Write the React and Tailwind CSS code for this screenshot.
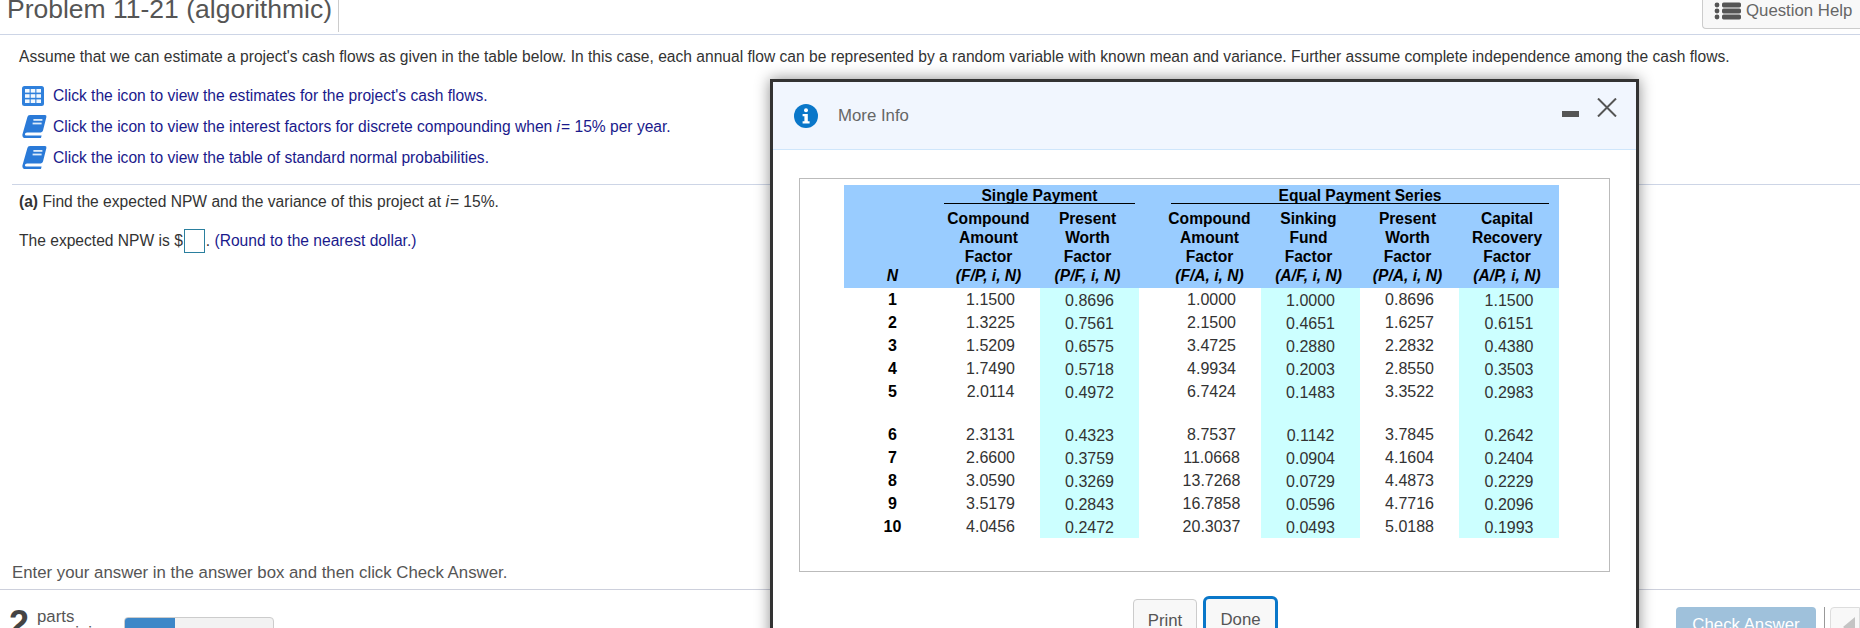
import React from 'react';

const font = "font-['Liberation_Sans',Arial,sans-serif]";

const rows = [
  ['1', '1.1500', '0.8696', '1.0000', '1.0000', '0.8696', '1.1500'],
  ['2', '1.3225', '0.7561', '2.1500', '0.4651', '1.6257', '0.6151'],
  ['3', '1.5209', '0.6575', '3.4725', '0.2880', '2.2832', '0.4380'],
  ['4', '1.7490', '0.5718', '4.9934', '0.2003', '2.8550', '0.3503'],
  ['5', '2.0114', '0.4972', '6.7424', '0.1483', '3.3522', '0.2983'],
  null,
  ['6', '2.3131', '0.4323', '8.7537', '0.1142', '3.7845', '0.2642'],
  ['7', '2.6600', '0.3759', '11.0668', '0.0904', '4.1604', '0.2404'],
  ['8', '3.0590', '0.3269', '13.7268', '0.0729', '4.4873', '0.2229'],
  ['9', '3.5179', '0.2843', '16.7858', '0.0596', '4.7716', '0.2096'],
  ['10', '4.0456', '0.2472', '20.3037', '0.0493', '5.0188', '0.1993'],
];

const heads = [
  [['Compound', 'Amount', 'Factor'], '(F/P, i, N)'],
  [['Present', 'Worth', 'Factor'], '(P/F, i, N)'],
  null,
  [['Compound', 'Amount', 'Factor'], '(F/A, i, N)'],
  [['Sinking', 'Fund', 'Factor'], '(A/F, i, N)'],
  [['Present', 'Worth', 'Factor'], '(P/A, i, N)'],
  [['Capital', 'Recovery', 'Factor'], '(A/P, i, N)'],
];

function GridIcon() {
  return (
    <svg width="22" height="20" viewBox="0 0 22 20" className="shrink-0">
      <rect width="22" height="20" rx="2.5" fill="#2f80dc" />
      {[3, 8.2, 13.4].map((y) =>
        [3, 8.7, 14.4].map((x) => <rect key={x + '-' + y} x={x} y={y} width="4.6" height="3.6" fill="#f2f8fe" />)
      )}
    </svg>
  );
}

function BookIcon() {
  return (
    <svg width="25" height="23" viewBox="0 0 25 23" className="shrink-0">
      <path d="M5.4 2 Q5.8 0 8 0 H23 Q24.8 0 24.4 2 L21 15.6 Q20.6 17.4 18.8 17.4 H5 Q3.2 17.4 2.9 19 Q2.7 20.6 4.6 20.6 H19.6 L19 23 H3.6 Q0 23 0.4 19.4 Z" fill="#2a7ad8" />
      <rect x="11.4" y="4" width="9" height="1.8" fill="#dcebfb" />
      <rect x="10.6" y="7.6" width="9" height="1.8" fill="#dcebfb" />
    </svg>
  );
}

function ListIcon() {
  return (
    <svg width="27" height="18" viewBox="0 0 27 18" className="shrink-0">
      <circle cx="3" cy="3" r="2.4" fill="#555" />
      <circle cx="3" cy="9" r="2.4" fill="#555" />
      <circle cx="3" cy="15" r="2.4" fill="#555" />
      <rect x="8" y="0.6" width="19" height="4.8" rx="1.6" fill="#555" />
      <rect x="8" y="6.6" width="19" height="4.8" rx="1.6" fill="#555" />
      <rect x="8" y="12.6" width="19" height="4.8" rx="1.6" fill="#555" />
    </svg>
  );
}

function InfoTable() {
  return (
    <table className="border-collapse table-fixed w-[715px] text-[16px] leading-[19px] text-[#333] ml-[44px]">
      <colgroup>
        <col className="w-[97px]" />
        <col className="w-[99px]" />
        <col className="w-[99px]" />
        <col className="w-[23px]" />
        <col className="w-[99px]" />
        <col className="w-[99px]" />
        <col className="w-[99px]" />
        <col className="w-[100px]" />
      </colgroup>
      <thead className="bg-[#99ccff] text-black text-[15.6px] leading-[19px] font-bold">
        <tr>
          <th className="p-0" />
          <th colSpan={2} className="p-0 pt-[1px] font-bold"><div className="ml-[3px] mr-[4px] border-b border-black h-[18px] leading-[20px]">Single Payment</div></th>
          <th className="p-0" />
          <th colSpan={4} className="p-0 pt-[1px] font-bold"><div className="ml-[9px] mr-[10px] border-b border-black h-[18px] leading-[20px]">Equal Payment Series</div></th>
        </tr>
        <tr>
          <th className="p-0 pb-[3px] align-bottom italic font-bold">N</th>
          {heads.map((h, i) =>
            h ? (
              <th key={i} className="p-0 pt-[5px] pb-[3px] pr-[4px] font-bold">
                {h[0].map((l, j) => <div key={j}>{l}</div>)}
                <div className="italic">{h[1]}</div>
              </th>
            ) : (
              <th key={i} className="p-0" />
            )
          )}
        </tr>
      </thead>
      <tbody>
        {rows.map((r, i) =>
          r ? (
            <tr key={i} className="h-[23px] text-center">
              <td className="p-0 font-bold text-black">{r[0]}</td>
              <td className="p-0">{r[1]}</td>
              <td className="p-0 bg-[#ccffff]"><span className="relative top-[1px]">{r[2]}</span></td>
              <td className="p-0" />
              <td className="p-0">{r[3]}</td>
              <td className="p-0 bg-[#ccffff]"><span className="relative top-[1px]">{r[4]}</span></td>
              <td className="p-0">{r[5]}</td>
              <td className="p-0 bg-[#ccffff]"><span className="relative top-[1px]">{r[6]}</span></td>
            </tr>
          ) : (
            <tr key={i} className="h-[20px]"><td colSpan={2} /><td className="bg-[#ccffff]" /><td /><td /><td className="bg-[#ccffff]" /><td /><td className="bg-[#ccffff]" /></tr>
          )
        )}
      </tbody>
    </table>
  );
}

function MoreInfoModal() {
  return (
    <div className="absolute left-[770px] top-[79px] w-[869px] h-[620px] bg-white border-[3px] border-[#333] shadow-[0_0_14px_rgba(0,0,0,0.45)]">
      <div className="h-[68px] bg-[#f1f6fe] border-b border-[#cfe6fb] flex items-center pl-[21px] pr-[19px]">
        <svg width="24" height="24" viewBox="0 0 24 24" className="shrink-0">
          <circle cx="12" cy="12" r="12" fill="#0a77c9" />
          <circle cx="12" cy="6.2" r="2" fill="#fff" />
          <path d="M8.6 10h5.2v7.2h1.8v2.2H8.6v-2.2h1.8v-5H8.6z" fill="#fff" />
        </svg>
        <span className="ml-[20px] text-[16.8px] text-[#666]">More Info</span>
        <div className="ml-auto flex items-center gap-[18px] text-[#555] relative -top-[8px]">
          <div className="w-[17px] h-[6px] bg-[#555] mt-[12px]" />
          <svg width="20" height="19" viewBox="0 0 20 19"><path d="M1 0.5 19 18.5M19 0.5 1 18.5" stroke="#555" strokeWidth="2" fill="none" /></svg>
        </div>
      </div>
      <div className="mt-[28px] mx-[26px] w-[811px] h-[394px] border border-[#bbb] pt-[6px]">
        <InfoTable />
      </div>
      <div className="mt-[24px] pl-[360px] flex items-start gap-[6px] text-[16.8px] text-[#555]">
        <button className="mt-[3px] w-[64px] h-[44px] bg-[#f8f8f8] border border-[#ccc] rounded-[4px]">Print</button>
        <button className="w-[75px] h-[48px] bg-[#f8f8f8] border-[3px] border-[#0a77c9] rounded-[6px]">Done</button>
      </div>
    </div>
  );
}

export default function App() {
  return (
    <div className={`relative w-[1860px] h-[628px] overflow-hidden bg-white ${font} text-[15.6px] text-[#333]`}>
      <header className="h-[35px] border-b border-[#cdd5e6] flex items-start">
        <div className="h-[32px] pl-[7px] pr-[6px] border-r border-[#ccc] overflow-hidden">
          <h1 className="text-[26.5px] leading-[26px] text-[#555] -mt-[4px] font-normal whitespace-nowrap">Problem 11-21 (algorithmic)</h1>
        </div>
        <button className="ml-auto h-[29px] w-[158px] border border-t-0 border-r-0 border-[#ccc] bg-[#f8f8f8] rounded-bl-[4px] flex items-center gap-[5px] pl-[11px] pb-[6px] text-[16.8px] text-[#666]">
          <ListIcon />
          Question Help
        </button>
      </header>

      <p className="pl-[19px] mt-[13px] leading-[18px]">
        Assume that we can estimate a project's cash flows as given in the table below. In this case, each annual flow can be represented by a random variable with known mean and variance. Further assume complete independence among the cash flows.
      </p>

      <ul className="mt-[14px] pl-[22px] text-[#1a1a8c] leading-[18px]">
        <li className="h-[31px] flex items-center gap-[9px]"><GridIcon />Click the icon to view the estimates for the project's cash flows.</li>
        <li className="h-[31px] flex items-center gap-[6px]"><BookIcon /><span>Click the icon to view the interest factors for discrete compounding when <i>i</i><span className="ml-[1px]">= 15% per year.</span></span></li>
        <li className="h-[31px] flex items-center gap-[6px]"><BookIcon />Click the icon to view the table of standard normal probabilities.</li>
      </ul>

      <div className="mt-[11px] ml-[12px] border-t border-[#cdd5e6] pt-[8px] pl-[7px]">
        <p className="leading-[18px]"><b>(a)</b> Find the expected NPW and the variance of this project at <i>i</i><span className="ml-[1px]">= 15%.</span></p>
        <p className="mt-[18px] flex items-center leading-[24px]">
          The expected NPW is $
          <span className="w-[21px] h-[24px] border border-[#2a7f9e] mx-[1px]" />
          .&nbsp;<span className="text-[#1a1a8c]">(Round to the nearest dollar.)</span>
        </p>
      </div>

      <div className="absolute left-0 right-0 top-[564px] h-[26px] border-b border-[#cdd0dc] pl-[12px] text-[16.8px] text-[#555] leading-[18px]">
        Enter your answer in the answer box and then click Check Answer.
      </div>

      <div className="absolute left-0 right-0 top-[606px] flex items-start">
        <span className="ml-[9px] text-[36px] leading-[36px] font-bold text-[#444]">2</span>
        <span className="ml-[8px] text-[16.8px] leading-[16px] text-[#555] mt-[3px] w-[87px]">parts<br />remaining</span>
        <div className="mt-[11px] w-[150px] h-[20px] border border-[#ccc] rounded-[4px] bg-[#f2f2f2] overflow-hidden">
          <div className="w-[50px] h-full bg-[#3d87c8]" />
        </div>
        <div className="ml-auto mt-[1px] flex items-start">
          <button className="w-[140px] h-[30px] rounded-[4px] bg-[#9fc1db] text-white text-[16.8px] pt-[6px] leading-[18px]">Check Answer</button>
          <div className="ml-[8px] w-px h-[30px] bg-[#999]" />
          <div className="ml-[5px] w-[30px] h-[30px] border border-[#ddd] rounded-tl-[4px] bg-[#f8f8f8]">
            <svg width="14" height="22" viewBox="0 0 14 22" className="ml-[12px] mt-[9px]"><path d="M12 0V20L0 10z" fill="#c4c4c4" /></svg>
          </div>
        </div>
      </div>

      <MoreInfoModal />
    </div>
  );
}
